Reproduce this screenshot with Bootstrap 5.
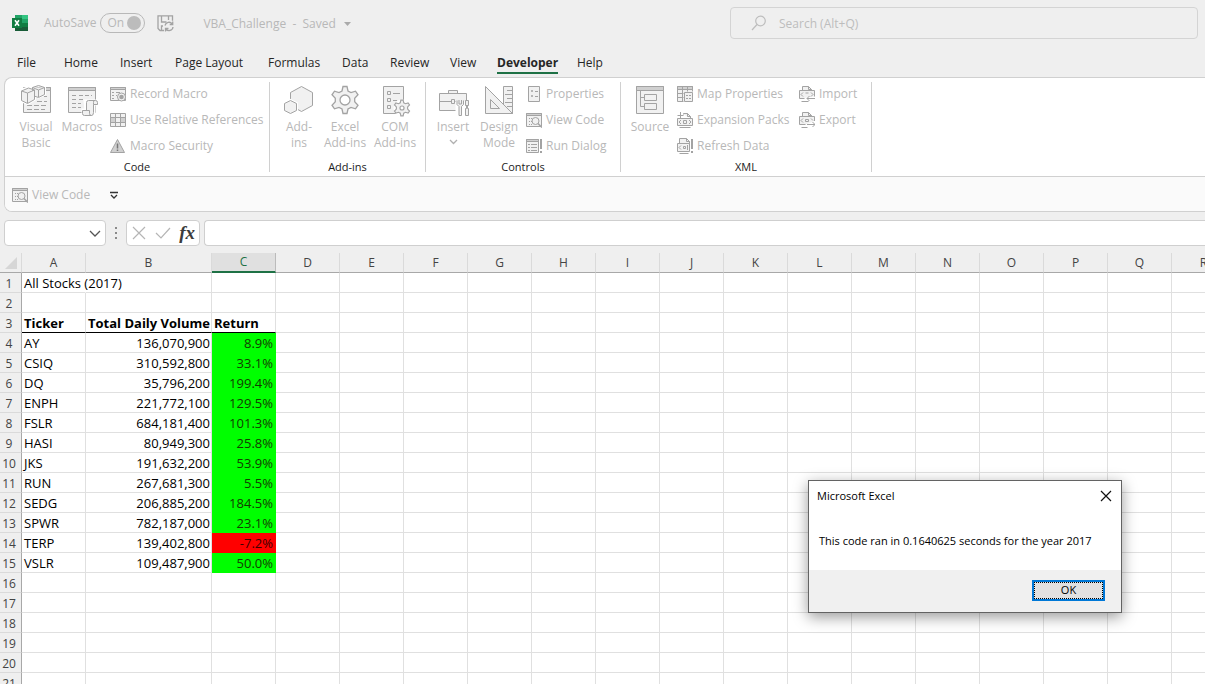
<!DOCTYPE html>
<html lang="en">
<head>
<meta charset="utf-8">
<meta name="viewport" content="width=device-width, initial-scale=1">
<title>VBA_Challenge - Excel</title>
<link href="https://cdn.jsdelivr.net/npm/bootstrap@5.3.0/dist/css/bootstrap.min.css" rel="stylesheet">
<style>
  :root { --ink: #262626; --dim: #b8b8b8; --edge: #d0d0d0; --chrome: #efefef; --green: #1e7145; }
  body { font-family: "Open Sans", "Noto Sans", sans-serif; font-size: 12px; line-height: 16px; color: var(--ink); background: var(--chrome); }
  .btn { --bs-btn-font-size: 12px; --bs-btn-padding-x: 0; --bs-btn-padding-y: 0; --bs-btn-border-width: 0; --bs-btn-line-height: 16px; --bs-btn-color: var(--dim); --bs-btn-border-radius: 2px; white-space: nowrap; }
  svg { flex: none; display: block; }
  .ic { fill: none; stroke: #a3a3a3; stroke-width: 1; }
  .ic .f { fill: #f1f1f1; }
  .ic .d { fill: #d0d0d0; }
  .ic .s { fill: #a3a3a3; stroke: none; }

  .title-row { height: 46px; padding-left: 12px; color: var(--dim); }
  .save-pill { width: 45px; height: 20px; border: 1px solid var(--dim); border-radius: 10px; padding: 0 3px 0 6px; }
  .save-pill .knob { appearance: none; width: 14px; height: 14px; margin: 0; border-radius: 50%; background: #bcbcbc; }
  .doc-name { margin-left: 29px; padding-top: 2px; }
  .search-wrap { width: 468px; height: 32px; border: 1px solid #d4d4d4; border-radius: 4px; margin-right: 7px; padding-left: 20px; gap: 12px; }
  .search-wrap input { background: none; border: 0; outline: 0; padding: 2px 0 0; font-size: 12px; color: #bdbdbd; }
  .search-wrap input::placeholder { color: #bdbdbd; }

  .tab-row { display: grid; grid-template-columns: 47px 56px 55px 93px 74px 48px 60px 47px 80px 60px; height: 31px; padding: 7px 0 0 17px; font-size: 12px; }
  .tab-row a { color: var(--ink); text-decoration: none; white-space: nowrap; justify-self: start; height: 21px; line-height: 19px; }
  .tab-row a.active { font-weight: 700; border-bottom: 2px solid var(--green); }

  .ribbon { margin-left: 4px; border: 1px solid var(--edge); border-right: 0; border-radius: 8px 0 0 8px; background: #fff; overflow: hidden; }
  .tool-groups { height: 98px; padding-top: 4px; }
  .tool-group { height: 90px; border-right: 1px solid var(--edge); }
  .tool-group .tools { height: 78px; }
  .group-name { font-size: 11px; line-height: 14px; text-align: center; color: #1c1c1c; }
  .w-code { width: 265px; } .w-addins { width: 156px; } .w-controls { width: 195px; } .w-xml { width: 251px; }
  .big { display: flex; flex-direction: column; align-items: center; align-self: flex-start; padding-top: 3px; width: 46px; }
  .big svg { margin-bottom: 2px; }
  .tools.inset { padding-left: 6px; }
  .stack { display: flex; flex-direction: column; gap: 10px; padding: 4px 0 0 5px; }
  .stack .btn { display: flex; gap: 4px; align-items: center; height: 16px; }
  .map-stack { width: 126px; }
  .quick { height: 35px; border-top: 1px solid var(--edge); background: #fafafa; padding: 2px 0 0 7px; }

  .formula { height: 41px; padding: 0 0 0 4px; }
  .field { height: 26px; background: #fff; border: 1px solid #cfcfcf; border-radius: 4px; }
  .namebox { width: 102px; position: relative; }
  .fx-box { width: 74px; padding: 0 4px 0 5px; }
  .namebox select { width: 100%; height: 24px; border: 0; appearance: none; background: none; }
  .namebox svg { position: absolute; right: 4px; top: 9px; pointer-events: none; }
  .btn.fx { font: italic 600 19px/20px "Liberation Serif", serif; color: #3c3c3c; }
  .field input { width: 100%; height: 100%; border: 0; outline: 0; background: none; }

  .sheet { overflow: hidden; height: calc(100vh - 253px); }
  .sheet table { table-layout: fixed; border-collapse: separate; border-spacing: 0; font-size: 13px; color: #000; }
  .sheet th, .sheet td { height: 20px; padding: 2px 2px 0; line-height: 17px; white-space: nowrap; }
  .sheet thead th { height: 20px; padding: 0; line-height: 18px; font-size: 12px; font-weight: 400; text-align: center; color: #444; background: var(--chrome); border-right: 1px solid #dadada; border-bottom: 1px solid #a8a8a8; }
  .sheet thead th.picked { background: #e0e0e0; color: var(--green); border-bottom: 2px solid var(--green); border-right-color: #bbb; }
  .sheet tbody th { padding: 2px 3px 0 0; font-size: 12px; font-weight: 400; text-align: center; color: #444; background: var(--chrome); border-right: 1px solid #a8a8a8; border-bottom: 1px solid #dadada; }
  .sheet td { background: #fff; border-right: 1px solid #e0e0e0; border-bottom: 1px solid #e0e0e0; }
  .sheet .spill { overflow: visible; border-right-color: #fff; }
  .sheet .head td.key { font-weight: 700; border-bottom-color: #000; }
  .sheet .num { text-align: right; padding-right: 1px; }
  .sheet .pct { padding-right: 2px; }
  .sheet .up { background: #0f0; border-color: #0f0; color: #143c00; }
  .sheet .down { background: #f00; border-color: #f00; color: #3c0000; }

  .msg { position: absolute; right: 83px; top: 480px; width: 314px; border: 1px solid #636363; background: #fff; box-shadow: 0 4px 14px rgba(0,0,0,.4); color: #000; font-size: 11px; }
  .msg header { height: 29px; padding: 0 9px 0 8px; }
  .msg p { margin: 0; height: 60px; padding: 23px 0 0 10px; }
  .msg footer { height: 42px; padding: 0 16px 2px 0; background: #f0f0f0; }
  .msg .ok { --bs-btn-font-size: 11px; --bs-btn-color: #000; --bs-btn-bg: #e1e1e1; width: 73px; height: 21px; border: 2px solid #0078d7; border-radius: 0; outline: 1px dotted #000; outline-offset: -3px; }
</style>
</head>
<body class="overflow-hidden">

<header>
  <div class="title-row d-flex align-items-center">
    <svg width="16" height="16" viewBox="0 0 16 16"><path fill="#21a366" d="M3 0h7v8H3z"/><path fill="#33c481" d="M10 0h6v4h-6z"/><path fill="#21a366" d="M10 4h6v4h-6z"/><path fill="#107c41" d="M3 4h7v4H3zM10 8h6v4h-6z"/><path fill="#185c37" d="M3 8h7v4h6v4H3z"/><path fill="#107c41" d="M0 3h10v10H0z"/><path stroke="#fff" stroke-width="1.600" d="M3 5.200l4 5.600M7 5.200l-4 5.600"/></svg>
    <label for="autosave" class="ms-3 me-1">AutoSave</label>
    <span class="save-pill d-flex align-items-center justify-content-between"><span>On</span><input id="autosave" class="knob" type="checkbox" checked></span>
    <button class="btn ms-2 ps-1" aria-label="Save"><svg width="17" height="17" viewBox="0 0 17 17" class="ic"><path stroke-width="1.300" d="M7 15.500H3L1 13.500V.8h14.500v5M4.500 1v6h5M4.500 15v-4H6M11.500 1v4"/><path stroke-width="1.300" d="M8 10.500a4 4 0 0 1 7.200-1.500M15.700 6.500V9.500h-3M16 12a4 4 0 0 1-7.200 2M8.500 16.500v-3h3"/></svg></button>
    <button class="btn doc-name d-flex align-items-center">VBA_Challenge&nbsp; -&nbsp; Saved <svg class="ms-2" width="7" height="4"><path fill="#aaa" d="M0 0h7L3.500 4z"/></svg></button>
    <div class="search-wrap d-flex align-items-center ms-auto">
      <svg width="16" height="16" viewBox="0 0 16 16" fill="none" stroke="#bdbdbd" stroke-width="1.200"><circle cx="9.500" cy="6" r="4.800"/><path d="M6 9.500L1 15"/></svg>
      <input type="text" class="flex-grow-1" placeholder="Search (Alt+Q)" aria-label="Search">
    </div>
  </div>
  <nav class="tab-row">
    <a href="#">File</a><a href="#">Home</a><a href="#">Insert</a><a href="#">Page Layout</a><a href="#">Formulas</a><a href="#">Data</a><a href="#">Review</a><a href="#">View</a><a href="#" class="active">Developer</a><a href="#">Help</a>
  </nav>
</header>

<section class="ribbon">
  <div class="tool-groups d-flex">
    <div class="tool-group w-code">
      <div class="tools d-flex ps-2">
        <button class="btn big"><svg class="ic" width="32" height="32" viewBox="0 1 32 32"><path class="f" d="M3.500 3.500h27v25h-27z"/><path class="d" d="M24 3.500h6.500v3H24z"/><path stroke-dasharray="5 2" d="M17 12.500h10M17 17.500h10M7 21.500h20M7 25.500h18"/><path stroke="#fff" stroke-width="3" d="M1.500 6.500l7-3 6 2v10l-7 4-6-3zM12.500 3l6-2 6 2v7l-6 3-6-2z"/><path class="f" d="M12.500 3.500l6-2 6 2v7l-6 3-6-2zM12.500 3.500l6 2.500 6-2.500M18.500 6v7"/><path class="f" d="M1.500 7l7-3 6 2v9.500l-7 4-6-3zM1.500 7l6 2 7-3M7.500 9v10"/></svg>Visual<br>Basic</button>
        <button class="btn big"><svg class="ic" width="32" height="32" viewBox="0 1 32 32"><path class="f" d="M2.500 3.500h27v25h-27z"/><path class="d" d="M2.500 3.500h27v3h-27z"/><path stroke-dasharray="4 2" d="M6 11.500h5M13 11.500h13M6 15.500h5M13 15.500h6M6 19.500h9M6 23.500h9"/><path fill="#fff" stroke="#fff" stroke-width="3" d="M19 17h12v3h-3v11H17v-5h3z"/><path class="f" d="M20.500 26.500v-8q0-2 2-2h7q2 0 2 2v2h-4v8q0 3-2 3h-7q-2 0-2-2v-3h7v3q0 2 2 2M27.500 20.500v-2q0-2 1-2"/></svg>Macros</button>
        <div class="stack">
          <button class="btn"><svg class="ic" width="16" height="16"><path class="f" d="M.5 1.500h15v13H.5z"/><path class="d" d="M.5 1.500h15v2H.5z"/><path d="M2 6.500h2M6 6.500h4M2 9.500h2M2 12.500h2M6 9.500h1"/><circle cx="11.500" cy="11" r="4" fill="#f1f1f1" /><circle class="s" cx="11.500" cy="11" r="2.300"/></svg>Record Macro</button>
          <button class="btn"><svg class="ic" width="16" height="16"><path class="f" d="M.5 1.500h15v13H.5z"/><path class="d" d="M.5 5.500h5v5h-5zM10.500 5.500h5v5h-5z"/><path d="M.5 5.500h15M.5 10.500h15M5.500 1.500v13M10.500 1.500v13"/></svg>Use Relative References</button>
          <button class="btn"><svg class="ic" width="16" height="16"><path class="d" d="M7.500 1.500l7 13H.5z"/><path stroke="#777" stroke-width="1.500" d="M7.500 5.500v5M7.500 11.500v1.500"/></svg>Macro Security</button>
        </div>
      </div>
      <div class="group-name">Code</div>
    </div>

    <div class="tool-group w-addins">
      <div class="tools inset d-flex">
        <button class="btn big"><svg class="ic" width="32" height="32"><path class="f" d="M18.500 1.500l11 6v13l-11 6-11-6v-13z"/><path class="f" stroke="#fff" stroke-width="3" d="M7.500 15.500l6 3v7l-6 3-6-3v-7z"/><path class="f" d="M7.500 15.500l6 3v7l-6 3-6-3v-7z"/></svg>Add-<br>ins</button>
        <button class="btn big"><svg class="ic" width="32" height="32" viewBox="-16 -15 32 32"><g stroke-width="1.300"><path class="f" d="M-3-9l1-4.500h4L3-9l3 1.600 4.500-1.400 2.500 3.600L9.700-1.800v3.600L13 5.200l-2.500 3.600L6 7.400 3 9l-1 4.500h-4L-3 9l-3-1.600-4.500 1.400L-13 5.200l3.300-3.400v-3.600L-13-5.200l2.500-3.600L-6-7.400z"/><circle r="5" fill="#fff"/></g></svg>Excel<br>Add-ins</button>
        <button class="btn big ms-1"><svg class="ic" width="32" height="32"><path class="f" d="M4.500 1.500h20v27h-20z"/><path d="M8.500 6.500h3v3h-3zM8.500 13.500h3v3h-3zM8.500 20.500h3v3h-3zM14 8.500h7M14 15.500h4"/><circle cx="23" cy="23" r="8.500" fill="#fff" stroke="none"/><g transform="translate(23 23) scale(.58)" stroke-width="2"><path class="f" d="M-3-9l1-4.500h4L3-9l3 1.600 4.500-1.400 2.500 3.600L9.700-1.800v3.600L13 5.200l-2.500 3.600L6 7.400 3 9l-1 4.500h-4L-3 9l-3-1.600-4.500 1.400L-13 5.200l3.300-3.400v-3.600L-13-5.200l2.500-3.600L-6-7.400z"/><circle r="3.500" fill="#fff"/></g></svg>COM<br>Add-ins</button>
      </div>
      <div class="group-name">Add-ins</div>
    </div>

    <div class="tool-group w-controls">
      <div class="tools d-flex ps-1">
        <button class="btn big"><svg class="ic" width="32" height="32"><path class="f" d="M2.500 8.500h27v17h-27zM11.500 8.500v-3h9v3M2.500 16.500h12M18 16.500h11M14.500 14.500h3v4h-3z"/><path stroke="#fff" stroke-width="8" d="M22.500 16v16M28.500 16v15"/><path class="f" d="M20 15.500v4l2 2v9h2.500v-9l2-2v-4M22 15v4h2.500v-4M28.500 15.500h3v5h-3zM29.500 20.500v3h-1v7h3v-7h-1v-3"/></svg>Insert<svg class="mt-1" width="9" height="6" fill="none" stroke="#b0b0b0" stroke-width="1.300"><path d="M1 1l3.500 3.500L8 1"/></svg></button>
        <button class="btn big"><svg class="ic" width="32" height="32"><path class="f" d="M20.500 1.500h9v27l-9-9zM2.500 1.500l27 27h-27zM7.500 14.500l9 9h-9z" /><path d="M24 5.500h5M22 9.500h7M24 13.500h5M22 17.500h7M24 21.500h5"/></svg>Design<br>Mode</button>
        <div class="stack ps-1">
          <button class="btn"><svg class="ic" width="16" height="16"><path class="f" d="M2.500.5h11v15h-11z"/><path d="M5.500 4.500h1v1h-1zM9 5.500h3M5.500 9.500h1v1h-1zM9 10.500h3"/></svg>Properties</button>
          <button class="btn"><svg class="ic" width="16" height="16"><path class="f" d="M.5 1.500h15v13H.5z"/><path class="d" d="M.5 1.500h15v2H.5z"/><path stroke-dasharray="1 1" d="M3 6.500h4M3 9.500h3M3 12.500h4"/><circle class="f" cx="9.500" cy="9" r="3.500"/><path stroke-width="1.500" d="M12 11.500l4 4"/></svg>View Code</button>
          <button class="btn"><svg class="ic" width="16" height="16"><path class="f" d="M.5 1.500h12v13H.5z"/><path class="d" d="M.5 1.500h12v2H.5z"/><path d="M2 6.500h2M5 6.500h6M2 9.500h2M5 9.500h6M2 12.500h2M5 12.500h6"/><path stroke-width="2" d="M15 1v10M15 13v2"/></svg>Run Dialog</button>
        </div>
      </div>
      <div class="group-name">Controls</div>
    </div>

    <div class="tool-group w-xml">
      <div class="tools inset d-flex">
        <button class="btn big"><svg class="ic" width="32" height="32"><path class="f" d="M2.500 1.500h27v27h-27z"/><path class="d" d="M2.500 1.500h27v4h-27z"/><path d="M10.500 9.500h12v6h-12zM10.500 18.500h12v6h-12zM6.500 6v15.500h4M6.500 12.500h4"/></svg>Source</button>
        <div class="stack ps-1 map-stack">
          <button class="btn"><svg class="ic" width="16" height="16"><path class="f" d="M6.500 15.500h-6V.5h15v5"/><path class="d" d="M.5.500h15v3H.5z"/><path d="M.5 7.500h6M.5 11.500h6M5.500.5v15M10.500.5v5"/><path class="f" d="M7.500 6.500h8v9h-8z"/><path d="M9 9.500h2M12 9.500h2M9 12.500h2M12 12.500h2"/></svg>Map Properties</button>
          <button class="btn"><svg class="ic" width="16" height="16"><path class="f" d="M6.500 2.500V1.500h4l3 3v2M2.500 15.500h11"/><path class="f" d="M.5 6.500h15v7H.5z"/><path stroke="#fff" stroke-width="3" d="M3.500 0v6"/><path d="M3.500 0v6M.5 3.500h6M10.500 1.500v3h3M4 8l-2 2 2 2M12 8l2 2-2 2M6.500 8.500h3v3h-3z"/></svg>Expansion Packs</button>
          <button class="btn"><svg class="ic" width="16" height="16"><path class="f" d="M2.500 6V.5h7l3 3V6M2.500 15.500h9"/><path class="f" d="M.5 5.500h12v8H.5z"/><path d="M9.500.5v3h3M4 7.500l-2 2 2 2M6.500 8.500h2v2h-2zM10.500 7v5"/><path stroke-width="2" d="M15 1v10M15 13v2"/></svg>Refresh Data</button>
        </div>
        <div class="stack ps-0">
          <button class="btn"><svg class="ic" width="16" height="16"><path class="f" d="M3.500 5V.5h6l3 3V5M2.500 15.500h7"/><path class="f" d="M.5 12.500v-8h15v6M.5 12.500h5"/><path d="M9.500.5v3h3M4 6.500l-2 2 2 2M12 6.500l2 2-2 2M6.500 7h3M16 12.500H8M10.500 10L8 12.500l2.500 2.500"/></svg>Import</button>
          <button class="btn"><svg class="ic" width="16" height="16"><path class="f" d="M3.500 5V.5h6l3 3V5M2.500 15.500h6"/><path class="f" d="M15.500 9V4.500H.5v8h6"/><path d="M9.500.5v3h3M4 6.500l-2 2 2 2M12 6.500l2 2M6.500 7.500h3v2h-3zM8 12.500h8M13.500 10l2.500 2.500-2.500 2.500"/></svg>Export</button>
        </div>
      </div>
      <div class="group-name">XML</div>
    </div>
  </div>
  <div class="quick d-flex align-items-center">
    <button class="btn d-flex align-items-center gap-1"><svg class="ic" width="16" height="16"><path class="f" d="M.5 1.500h15v13H.5z"/><path class="d" d="M.5 1.500h15v2H.5z"/><path stroke-dasharray="1 1" d="M3 6.500h4M3 9.500h3M3 12.500h4"/><circle class="f" cx="9.500" cy="9" r="3.500"/><path stroke-width="1.500" d="M12 11.500l4 4"/></svg>View Code</button>
    <button class="btn ms-3 ps-1" aria-label="Customize toolbar"><svg width="8" height="8" fill="none" stroke="#333" stroke-width="1.300"><path d="M0 1.500h8M1 4l3 3 3-3"/></svg></button>
  </div>
</section>

<div class="formula d-flex align-items-center">
  <div class="field namebox"><select aria-label="Name box"><option></option></select><svg width="12" height="8" fill="none" stroke="#555" stroke-width="1.300"><path d="M1 1l5 5 5-5"/></svg></div>
  <svg class="mx-2" width="4" height="12"><path fill="#8a8a8a" d="M1 0h2v2H1zM1 5h2v2H1zM1 10h2v2H1z"/></svg>
  <div class="field fx-box d-flex align-items-center justify-content-between">
    <button class="btn" aria-label="Cancel"><svg width="14" height="14" stroke="#b5b5b5" stroke-width="1.200"><path d="M1 1l12 12M13 1L1 13"/></svg></button>
    <button class="btn" aria-label="Enter"><svg width="16" height="12" fill="none" stroke="#b5b5b5" stroke-width="1.200"><path d="M1 6l5 5L15 1"/></svg></button>
    <button class="btn fx" aria-label="Insert function">fx</button>
  </div>
  <div class="field flex-grow-1 ms-1 border-end-0 rounded-end-0"><input type="text" aria-label="Formula"></div>
</div>

<main class="sheet">
  <table>
    <colgroup id="cols"></colgroup>
    <thead><tr id="letters"></tr></thead>
    <tbody id="rows"></tbody>
  </table>
</main>

<div class="msg" role="dialog" aria-labelledby="msgTitle">
  <header class="d-flex align-items-center justify-content-between"><span id="msgTitle">Microsoft Excel</span><button class="btn" aria-label="Close"><svg width="12" height="12" stroke="#111" stroke-width="1.200"><path d="M1 1l10 10M11 1L1 11"/></svg></button></header>
  <p>This code ran in 0.1640625 seconds for the year 2017</p>
  <footer class="d-flex align-items-center justify-content-end"><button class="btn ok">OK</button></footer>
</div>

<script src="https://cdn.jsdelivr.net/npm/bootstrap@5.3.0/dist/js/bootstrap.bundle.min.js"></script>
<script>
  const stocks = [
    ['AY', '136,070,900', '8.9%'], ['CSIQ', '310,592,800', '33.1%'], ['DQ', '35,796,200', '199.4%'],
    ['ENPH', '221,772,100', '129.5%'], ['FSLR', '684,181,400', '101.3%'], ['HASI', '80,949,300', '25.8%'],
    ['JKS', '191,632,200', '53.9%'], ['RUN', '267,681,300', '5.5%'], ['SEDG', '206,885,200', '184.5%'],
    ['SPWR', '782,187,000', '23.1%'], ['TERP', '139,402,800', '-7.2%'], ['VSLR', '109,487,900', '50.0%']
  ];
  // Only as many columns and rows as the window can show.
  const count = Math.min(26, 2 + Math.ceil((innerWidth - 212) / 64));
  const rowCount = Math.max(15, Math.ceil((innerHeight - 272) / 20));
  const letters = 'ABCDEFGHIJKLMNOPQRSTUVWXYZ'.slice(0, count).split('');
  const widths = [22, 64, 126, ...letters.slice(2).map(() => 64)];
  document.querySelector('.sheet table').style.width = widths.reduce((a, b) => a + b) + 'px';
  document.getElementById('cols').innerHTML = widths.map(w => `<col style="width:${w}px">`).join('');
  document.getElementById('letters').innerHTML =
    '<th><svg class="ms-auto me-1" width="12" height="12"><path fill="#d6d6d6" d="M12 0v12H0z"/></svg></th>' +
    letters.map(l => `<th${l === 'C' ? ' class="picked"' : ''}>${l}</th>`).join('');
  let html = '';
  for (let r = 1; r <= rowCount; r++) {
    let cells = ['<td></td>', '<td></td>', '<td></td>'];
    if (r === 1) cells[0] = '<td class="spill">All Stocks (2017)</td>';
    if (r === 3) cells = ['Ticker', 'Total Daily Volume', 'Return'].map(t => `<td class="key">${t}</td>`);
    const s = stocks[r - 4];
    if (s) cells = [`<td>${s[0]}</td>`, `<td class="num">${s[1]}</td>`, `<td class="num pct ${s[2][0] === '-' ? 'down' : 'up'}">${s[2]}</td>`];
    html += `<tr${r === 3 ? ' class="head"' : ''}><th>${r}</th>${cells.join('')}${'<td></td>'.repeat(count - 3)}</tr>`;
  }
  document.getElementById('rows').innerHTML = html;
</script>
</body>
</html>
